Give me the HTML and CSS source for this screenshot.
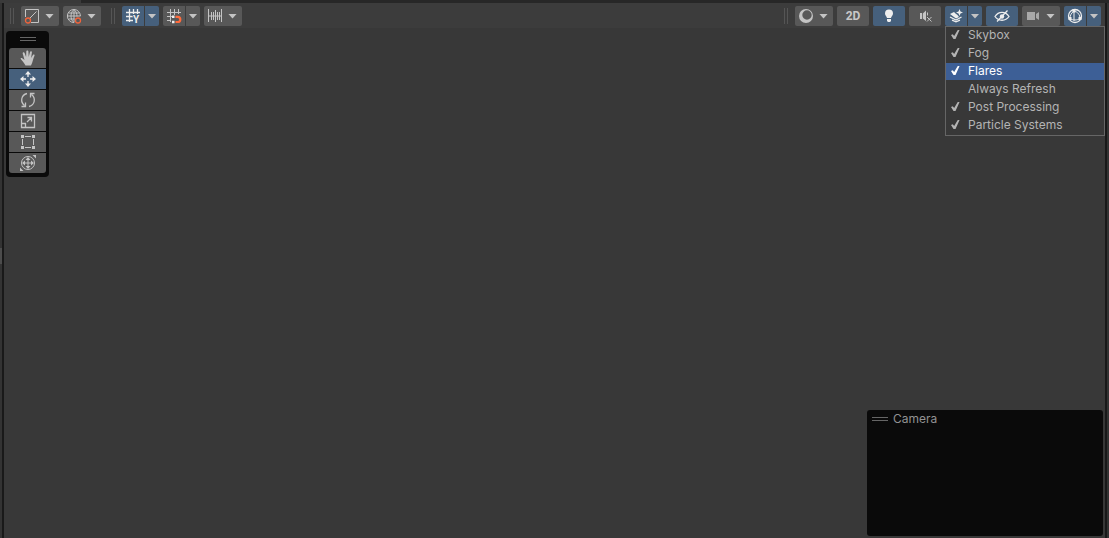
FILE: index.html
```html
<!DOCTYPE html>
<html lang="en">
<head>
    <meta charset="UTF-8">
    <meta name="viewport" content="width=device-width, initial-scale=1.0">
    <title>Scene View</title>
    <link rel="stylesheet" href="styles.css">
</head>
<body>
    <div class="tab-strip"><div class="tab"></div></div>

    <div class="window">
        <div class="side left"><div class="side-mark"></div></div>

        <main class="scene">
            <!-- toolbar -->
            <header class="toolbar">
                <div class="group">
                    <span class="grip"></span>
                    <button class="btn drop" aria-label="Tool handle position">
                        <svg class="icon" viewBox="0 0 16 16"><path d="M1.500 9V1.500h13v13H7M6 10l6.500-6.500"/><circle class="orange" cx="4" cy="12.500" r="2.500"/></svg>
                        <span class="arrow"></span>
                    </button>
                    <button class="btn drop" aria-label="Tool handle rotation">
                        <svg class="icon" viewBox="0 0 16 16"><path d="M14.400 8A6.500 6.500 0 1 0 8 14.500M8 1.500v13M1.500 8h13M2.500 5h11M2.500 11h6M8 1.500C4 4 4 12 8 14.500M8 1.500c2 1.500 3 4 3 7"/><circle class="orange" cx="12" cy="12.500" r="2.500"/></svg>
                        <span class="arrow"></span>
                    </button>
                </div>
                <div class="group">
                    <span class="grip"></span>
                    <div class="split active">
                        <button class="btn" aria-label="Grid visibility">
                            <svg class="icon" viewBox="0 0 16 16"><path class="thick" d="M4.500 1v13M8.500 1v8M12.500 1v5M1 4.500h14M1 8.500h8M1 12.500h7"/><text x="8" y="15">Y</text></svg>
                        </button>
                        <button class="btn menu-btn" aria-label="Grid options"><span class="arrow"></span></button>
                    </div>
                    <div class="split">
                        <button class="btn" aria-label="Grid snapping">
                            <svg class="icon" viewBox="0 0 16 16"><path d="M4.500 1v13M8.500 1v6M12.500 1v5M1 4.500h14M1 8.500h5M1 12.500h4"/><path class="magnet" d="M9.500 8.800h2.200a2.600 2.600 0 0 1 0 5.200H9.500"/><path class="fill bright" d="M6 7.500h2.500v2.500H6zM6 12.800h2.500v2.500H6z"/></svg>
                        </button>
                        <button class="btn menu-btn" aria-label="Snapping options"><span class="arrow"></span></button>
                    </div>
                    <button class="btn drop" aria-label="Snap increment">
                        <svg class="icon" viewBox="0 0 16 16"><path d="M1.500 1v13M4.500 4v8M6.500 4v8M8.500 2v12M10.500 4v8M12.500 4v8M14.500 1v13M1 8h14"/></svg>
                        <span class="arrow"></span>
                    </button>
                </div>

                <div class="group right">
                    <span class="grip"></span>
                    <button class="btn drop" aria-label="Draw mode">
                        <svg class="icon" viewBox="0 0 16 16"><path class="fill" fill-rule="evenodd" d="M8 1a7 7 0 1 0 0 14a7 7 0 1 0 0-14zM9 2.300a4.700 4.700 0 1 1 0 9.400a4.700 4.700 0 1 1 0-9.400z"/></svg>
                        <span class="arrow"></span>
                    </button>
                    <button class="btn wide">2D</button>
                    <button class="btn wide active" aria-label="Scene lighting">
                        <svg class="icon" viewBox="0 0 16 16"><path class="fill" d="M8 1.500a4 4 0 0 1 4 4c0 2-1.500 2.800-2 4.500H6c-.5-1.700-2-2.500-2-4.500a4 4 0 0 1 4-4zM6 11h4v2l-1 1H7l-1-1z"/></svg>
                    </button>
                    <button class="btn wide" aria-label="Scene audio">
                        <svg class="icon" viewBox="0 0 16 16"><path class="fill" d="M3 5h2v6H3zM5.800 5.500L9 2.500v10.500l-3.200-2.500z"/><path d="M10 9l4.500 4.500M14.500 9l-4.500 4.500M10.500 4.500v3"/></svg>
                    </button>
                    <div class="split active">
                        <button class="btn" aria-label="Scene effects">
                            <svg class="icon" viewBox="0 0 16 16"><path class="fill" d="M11.500 1l1 2.500L15 4.500l-2.500 1-1 2.500-1-2.500-2.500-1 2.500-1zM2 6l4-2 1.500 1.500L9.500 7l1.500 2-3 1.500z"/><path class="thick" d="M2 9l6 3 5.500-3"/><path class="thick" d="M4 12.200l4 1.600 4-1.600"/></svg>
                        </button>
                        <button class="btn menu-btn" aria-label="Effects menu" aria-expanded="true"><span class="arrow"></span></button>

                        <!-- effects drop-down -->
                        <div class="effects-menu">
                            <label class="item"><input type="checkbox" checked>Skybox</label>
                            <label class="item"><input type="checkbox" checked>Fog</label>
                            <label class="item selected"><input type="checkbox" checked>Flares</label>
                            <label class="item"><input type="checkbox">Always Refresh</label>
                            <label class="item"><input type="checkbox" checked>Post Processing</label>
                            <label class="item"><input type="checkbox" checked>Particle Systems</label>
                        </div>
                    </div>
                    <button class="btn wide active" aria-label="Hidden objects">
                        <svg class="icon" viewBox="0 0 16 16"><path class="thick" d="M1 8.500c3.500-5.500 10.500-5.500 14 0-3.500 5-10.500 5-14 0zM3 13.500L13.500 2.500"/><circle class="fill" cx="8" cy="8.500" r="2.200"/></svg>
                    </button>
                    <button class="btn drop" aria-label="Scene camera">
                        <svg class="icon" viewBox="0 0 16 16"><path class="fill dim" d="M2 4h8v8H2zM11 6l3-2v8l-3-2z"/></svg>
                        <span class="arrow"></span>
                    </button>
                    <div class="split active">
                        <button class="btn" aria-label="Gizmos">
                            <svg class="icon" viewBox="0 0 16 16"><circle class="thick" cx="8" cy="8" r="6.500"/><path d="M7 3C4 5 3 8 3 10.500M7 3c4 1 6 4 6 7.500M7 3v10M3 10.500c3 2 7 2 10 0"/><path class="fill" d="M5.500 1.500h3v3h-3zM1.500 9h3v3h-3zM11.500 9h3v3h-3z"/></svg>
                        </button>
                        <button class="btn menu-btn" aria-label="Gizmo options"><span class="arrow"></span></button>
                    </div>
                </div>
            </header>

            <div class="viewport">
                <!-- tools overlay -->
                <div class="tools">
                    <span class="bars"></span>
                    <button class="tool" aria-label="View tool">
                        <svg class="icon" viewBox="0 0 16 16"><path class="fill" d="M5.500 15.500C4 12.500 2 10.500.7 9c-.4-.8.7-1.400 1.500-.8L4.500 10 2.700 3.500c-.2-1.300 1.500-1.600 1.900-.4L6.100 7 6.300 1.500c0-1.400 2-1.400 2.100 0L8.700 7l1.300-4.900c.4-1.300 2.100-.9 1.900.4L11.100 8l1.800-3c.7-1 2-.4 1.600.8C13.200 8 13 12 11 15.500z"/></svg>
                    </button>
                    <button class="tool active" aria-label="Move tool">
                        <svg class="icon" viewBox="0 0 16 16"><path class="thick" d="M8 2v4M8 10v4M2 8h4M10 8h4"/><path class="fill" d="M8 0l3 3.500H5zM8 16l3-3.500H5zM0 8l3.500-3v6zM16 8l-3.500-3v6z"/></svg>
                    </button>
                    <button class="tool" aria-label="Rotate tool">
                        <svg class="icon" viewBox="0 0 16 16"><path class="thick" d="M7 1.500C1 3 0 10 4.500 13.500M9 14.500C15 13 16 6 11.500 2.500M1.500 14.500h4v-4M14.500 1.500h-4v4"/></svg>
                    </button>
                    <button class="tool" aria-label="Scale tool">
                        <svg class="icon" viewBox="0 0 16 16"><path class="thick" d="M1.500 10V1.500h13v13H6M1.500 10.500h4v4h-4zM7 9l5-5M7.500 4.500h4V8.500"/></svg>
                    </button>
                    <button class="tool" aria-label="Rect tool">
                        <svg class="icon" viewBox="0 0 16 16"><path d="M5 2.500h6M5 13.500h6M2.500 5v6M13.500 5v6"/><path class="fill" d="M1 1h3v3H1zM12 1h3v3h-3zM1 12h3v3H1zM12 12h3v3h-3z"/></svg>
                    </button>
                    <button class="tool" aria-label="Transform tool">
                        <svg class="icon" viewBox="0 0 16 16"><circle cx="8" cy="8" r="6.500"/><path d="M8 3v10M3 8h10"/><path class="fill" d="M8 2l2.500 3h-5zM8 14l2.500-3h-5zM2 8l3-2.500v5zM14 8l-3-2.500v5zM12.500 0H16v3.500zM0 12.500V16h3.500z"/></svg>
                    </button>
                </div>

                <!-- camera preview -->
                <section class="camera">
                    <h2 class="camera-title"><span class="bars"></span>Camera</h2>
                </section>
            </div>
        </main>

        <div class="side right-side"></div>
    </div>
</body>
</html>
```

FILE: styles.css
```css
* {
    box-sizing: border-box;
}
body {
    margin: 0;
    height: 100vh;
    display: flex;
    flex-direction: column;
    overflow: hidden;
    background: #383838;
    color: #b4b4b4;
    font-family: "Inter", sans-serif;
    font-size: 12px;
}
button {
    margin: 0;
    padding: 0;
    border: none;
    color: inherit;
    font: inherit;
}
.tab-strip {
    height: 3px;
    background: #272727;
    flex-shrink: 0;
}
.tab {
    width: 81px;
    height: 100%;
    background: #3a3a3a;
}
.window {
    flex: 1;
    display: flex;
    min-height: 0;
}
.side {
    width: 4px;
    flex-shrink: 0;
    background: #333;
}
.left {
    border-right: 2px solid #191919;
    display: flex;
    align-items: center;
}
.side-mark {
    width: 2px;
    height: 16px;
    background: #4c4c4c;
    margin-bottom: 30px;
}
.right-side {
    border-left: 2px solid #191919;
}
.scene {
    flex: 1;
    display: flex;
    flex-direction: column;
    min-width: 0;
}

/* toolbar */
.toolbar {
    display: flex;
    gap: 10px;
    padding: 3px 4px 2px 6px;
    background: #3c3c3c;
}
.group {
    display: flex;
    gap: 4px;
}
.right {
    margin-left: auto;
}
.grip {
    width: 4px;
    height: 16px;
    margin: 2px 3px 2px 0;
    border: solid #555;
    border-width: 0 1px;
}
.btn {
    height: 20px;
    display: flex;
    align-items: center;
    justify-content: center;
    background: #585858;
    border-radius: 2px;
}
.drop {
    width: 38px;
    gap: 5px;
    padding-right: 2px;
}
.wide {
    width: 32px;
    font-family: "Roboto", sans-serif;
    font-weight: bold;
    color: #c8c8c8;
}
.split {
    display: flex;
    gap: 1px;
    position: relative;
}
.split > .btn {
    width: 22px;
    border-radius: 2px 0 0 2px;
}
.split > .menu-btn {
    width: 14px;
    border-radius: 0 2px 2px 0;
}
.active,
.active > .btn {
    background: #46607c;
}
.split.active {
    background: none;
}
.arrow {
    width: 9px;
    height: 5px;
    background: #c4c4c4;
    clip-path: polygon(0 0, 100% 0, 50% 100%);
}

/* icons */
.icon {
    width: 16px;
    height: 16px;
    fill: none;
    stroke: #c4c4c4;
    flex-shrink: 0;
    overflow: visible;
}
.active .icon {
    stroke: #eee;
}
.icon .thick {
    stroke-width: 1.3;
}
.icon .fill {
    fill: #c4c4c4;
    stroke: none;
}
.icon .bright,
.active .icon .fill {
    fill: #eee;
}
.icon .dim {
    fill: #a8a8a8;
}
.icon .orange {
    stroke: #f0643c;
    stroke-width: 1.3;
}
.icon .magnet {
    stroke: #ff6b3c;
    stroke-width: 2.2;
}
.icon text {
    fill: #eee;
    stroke: #46607c;
    stroke-width: 2;
    paint-order: stroke;
    font: bold 10px "Roboto", sans-serif;
}

/* effects drop-down */
.effects-menu {
    position: absolute;
    top: 100%;
    left: 0;
    z-index: 1;
    width: 160px;
    display: flex;
    flex-direction: column;
    gap: 1px;
    padding-bottom: 1px;
    background: #383838;
    border: 1px solid #666;
}
.item {
    display: flex;
    align-items: center;
    gap: 8px;
    height: 17px;
    padding: 0 0 2px 5px;
}
.item input {
    appearance: none;
    width: 9px;
    height: 9px;
    margin: 0;
    color: inherit;
}
.item input:checked {
    background: currentColor;
    clip-path: polygon(0 55%, 20% 48%, 35% 68%, 75% 0, 95% 0, 50% 100%, 28% 100%);
}
.selected {
    background: #3d5f96;
    color: #fff;
}

/* overlays */
.viewport {
    flex: 1;
    display: flex;
    justify-content: space-between;
    align-items: flex-start;
    padding: 3px 2px 2px;
}
.tools {
    display: flex;
    flex-direction: column;
    align-items: center;
    gap: 1px;
    padding: 6px 3px 4px;
    background: #0a0a0a;
    border-radius: 4px;
}
.bars {
    width: 16px;
    height: 4px;
    border: solid #666;
    border-width: 1px 0;
}
.tools .bars {
    margin-bottom: 6px;
}
.tool {
    width: 37px;
    height: 20px;
    display: flex;
    align-items: center;
    justify-content: center;
    background: #585858;
}
.tool.active {
    background: #46607c;
}
.tool:first-of-type {
    border-radius: 3px 3px 0 0;
}
.tool:last-of-type {
    border-radius: 0 0 3px 3px;
}
.camera {
    align-self: flex-end;
    width: 236px;
    height: 126px;
    background: #0a0a0a;
    border-radius: 3px;
}
.camera-title {
    display: flex;
    align-items: center;
    gap: 5px;
    height: 17px;
    margin: 0;
    padding-left: 5px;
    font-size: 12px;
    font-weight: normal;
    color: #929292;
}
```
